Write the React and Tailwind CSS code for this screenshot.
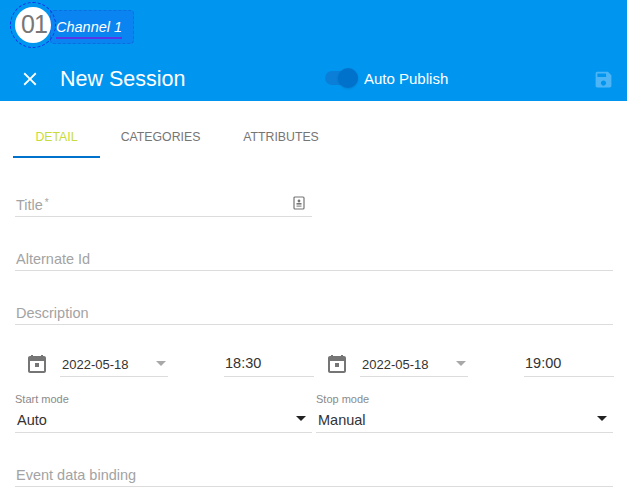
const font = { fontFamily: '"Liberation Sans", Arial, sans-serif' };

function CalendarIcon() {
  return (
    <svg width="24" height="24" viewBox="0 0 24 24" fill="#757575" className="shrink-0">
      <path d="M16 2v1H8V2H6v1H5c-1.1 0-2 .9-2 2v13c0 1.1.9 2 2 2h14c1.1 0 2-.9 2-2V5c0-1.1-.9-2-2-2h-1V2h-2zm3 16H5V8h14v10z" />
      <rect x="10" y="10" width="4" height="4" />
    </svg>
  );
}

function Caret({ color = 'border-t-[#222]' }) {
  return <span className={`block w-0 h-0 border-x-[5px] border-x-transparent border-t-[5px] ${color}`} />;
}

function TextField({ label, required, width = 'w-full', icon }) {
  return (
    <div className={`${width} h-[31px] border-b border-[#dcdcdc] flex items-end justify-between pb-[1px]`}>
      <span className="text-[14.5px] leading-[20px] text-[#a3a3a3] pl-px">
        {label}
        {required && <span className="text-[10px] align-[4px] ml-[2px]">*</span>}
      </span>
      {icon}
    </div>
  );
}

function DateTime({ date, time }) {
  return (
    <div className="flex items-start w-[300px] shrink-0">
      <div className="w-[46px] pl-[11px] pt-[4px] shrink-0">
        <CalendarIcon />
      </div>
      <div className="w-[108px] h-[28px] border-b border-[#dcdcdc] flex items-center justify-between pl-[2px] pr-[1px] pt-[4px] shrink-0">
        <span className="text-[13px] text-[#333]">{date}</span>
        <span className="mr-[1px] mb-[3px]"><Caret color="border-t-[#a8a8a8]" /></span>
      </div>
      <div className="ml-[56px] w-[90px] h-[28px] border-b border-[#dcdcdc] flex items-center pl-[1px] pt-[3px]">
        <span className="text-[14.5px] text-[#333]">{time}</span>
      </div>
    </div>
  );
}

function SelectField({ label, value }) {
  return (
    <div className="w-[297px]">
      <div className="text-[11px] leading-[13px] text-[#8a8a8a]">{label}</div>
      <div className="h-[27px] border-b border-[#dcdcdc] flex items-center justify-between pl-[2px] pr-[6px] pt-[4px]">
        <span className="text-[14.5px] text-[#333]">{value}</span>
        <span className="mb-[5px]"><Caret /></span>
      </div>
    </div>
  );
}

export default function App() {
  return (
    <div style={font} className="w-[627px] h-[502px] overflow-hidden bg-white">
      <div className="h-[101px] bg-[#0096f0] flex flex-col">
        <div className="h-[53px] flex items-start pt-[2px] pl-[10px]">
          <div className="relative z-10 w-[46px] h-[46px] rounded-full border border-dashed border-[#1a2ee6] flex items-center justify-center shrink-0">
            <div className="w-[36px] h-[36px] rounded-full bg-white flex items-center justify-center text-[25px] text-[#777] tracking-[-1px] pl-[2px]">01</div>
          </div>
          <div className="ml-[-6px] mt-[8px] w-[84px] h-[34px] rounded-[4px] border border-dashed border-[#0a6fe0] bg-[#0a84f0] pl-[5px] pt-[8px]">
            <div className="w-[66px] text-[14.5px] leading-[16px] italic text-white border-b-2 border-[#5b35e8] pb-[2px] whitespace-nowrap">Channel 1</div>
          </div>
        </div>
        <div className="flex items-center h-[48px] pt-[4px]">
          <svg width="22" height="22" viewBox="0 0 24 24" fill="white" className="ml-[19px] shrink-0">
            <path d="M19 6.41 17.59 5 12 10.59 6.41 5 5 6.41 10.59 12 5 17.59 6.41 19 12 13.41 17.59 19 19 17.59 13.41 12z" />
          </svg>
          <h1 className="ml-[19px] w-[265px] text-[21.5px] text-white font-normal">New Session</h1>
          <div className="relative w-[33px] h-[14px] mb-[2px] rounded-full bg-[#0b7fd8] shrink-0">
            <span className="absolute right-0 top-[-3px] w-[20px] h-[20px] rounded-full bg-[#0072cc] shadow-sm" />
          </div>
          <span className="ml-[6px] text-[15px] text-white">Auto Publish</span>
          <svg width="21" height="21" viewBox="0 0 24 24" fill="#4db5f5" className="ml-auto mr-[13px] shrink-0">
            <path d="M17 3H5c-1.11 0-2 .9-2 2v14c0 1.1.89 2 2 2h14c1.1 0 2-.9 2-2V7l-4-4zm-5 16c-1.66 0-3-1.34-3-3s1.34-3 3-3 3 1.34 3 3-1.34 3-3 3zm3-10H5V5h10v4z" />
          </svg>
        </div>
      </div>

      <div className="flex h-[57px] pl-[13px] text-[12.3px] font-normal">
        <div className="w-[87px] flex items-center justify-center border-b-2 border-[#0072cc] text-[#c6dc3c] pt-[18px]">DETAIL</div>
        <div className="w-[121px] flex items-center justify-center text-[#757575] pt-[18px] mb-[2px]">CATEGORIES</div>
        <div className="w-[120px] flex items-center justify-center text-[#757575] pt-[18px] mb-[2px]">ATTRIBUTES</div>
      </div>

      <div className="pl-[15px] pr-[14px] pt-[28px]">
        <TextField
          label="Title"
          required
          width="w-[297px]"
          icon={
            <svg width="12" height="14" viewBox="0 0 12 14" fill="none" className="mr-[7px] mb-[5px] shrink-0">
              <rect x="1" y="1" width="10" height="12" rx="1" stroke="#757575" strokeWidth="1.2" />
              <circle cx="6" cy="5" r="1.4" fill="#757575" />
              <rect x="3.5" y="7" width="5" height="1.6" fill="#757575" />
              <rect x="3.5" y="9.6" width="5" height="1" fill="#757575" />
            </svg>
          }
        />
        <div className="mt-[23px]"><TextField label="Alternate Id" /></div>
        <div className="mt-[23px]"><TextField label="Description" /></div>
      </div>

      <div className="flex pt-[24px] pl-[15px] ml-[-1px]">
        <DateTime date="2022-05-18" time="18:30" />
        <DateTime date="2022-05-18" time="19:00" />
      </div>

      <div className="flex pt-[16px] pl-[15px] pr-[14px] gap-[4px]">
        <SelectField label="Start mode" value="Auto" />
        <SelectField label="Stop mode" value="Manual" />
      </div>

      <div className="pl-[15px] pr-[14px] pt-[23px]">
        <TextField label="Event data binding" />
      </div>
    </div>
  );
}
